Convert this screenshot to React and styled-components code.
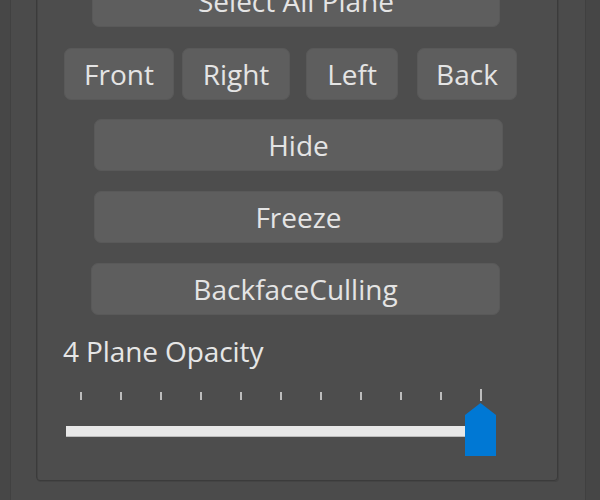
import React from "react";
import styled, { createGlobalStyle } from "styled-components";

const GlobalStyle = createGlobalStyle`
  html, body {
    margin: 0;
    padding: 0;
    background: #4b4b4b;
  }
  body {
    font-family: "Open Sans", "Noto Sans", "DejaVu Sans", sans-serif;
  }
`;

const Page = styled.div`
  width: 600px;
  height: 500px;
  overflow: hidden;
  display: flex;
  background: #4b4b4b;
`;

const LeftStrip = styled.div`
  width: 10px;
  flex: none;
  background: #474747;
  border-right: 1px solid #414141;
`;

const Main = styled.div`
  flex: 1;
  padding-left: 25px;
  padding-right: 27px;
`;

const RightStrip = styled.div`
  width: 14px;
  flex: none;
  background: #464646;
  border-left: 1px solid #404040;
`;

const GroupBox = styled.div`
  margin-top: -40px;
  height: 521px;
  box-sizing: border-box;
  border: 1px solid #3b3b3b;
  border-radius: 4px;
  background: #4d4d4d;
  box-shadow: inset 1px 1px 0 #454545, 1px 1px 0 #444;
  display: flex;
  flex-direction: column;
  padding-top: 14px;
`;

const Button = styled.button`
  box-sizing: border-box;
  height: 52px;
  width: ${(p) => p.$w}px;
  margin-left: ${(p) => p.$ml}px;
  flex: none;
  padding: 0;
  border: 1px solid #595959;
  border-radius: 7px;
  background: #5e5e5e;
  color: #e4e4e4;
  font-family: inherit;
  font-size: 28px;
  line-height: 1;
  text-align: center;
  cursor: pointer;
`;

const Row = styled.div`
  display: flex;
  margin-top: ${(p) => p.$mt}px;
`;

const Label = styled.div`
  margin: 17px 0 0 26px;
  color: #e6e6e6;
  font-size: 28px;
  line-height: 38px;
  height: 38px;
  letter-spacing: -0.1px;
`;

const Slider = styled.div`
  position: relative;
  margin: 19px 0 0 29px;
  width: 430px;
  height: 70px;
`;

const Ticks = styled.div`
  display: flex;
  justify-content: space-between;
  align-items: flex-end;
  width: 402px;
  margin-left: 14px;
  height: 12px;
`;

const Tick = styled.span`
  width: 2px;
  height: ${(p) => (p.$end ? 12 : 8)}px;
  background: #bdbdbd;
  margin-bottom: ${(p) => (p.$end ? 0 : 1)}px;
`;

const Track = styled.div`
  margin-top: 25px;
  width: 400px;
  height: 10px;
  background: #e8e8e8;
  box-shadow: 0 1px 0 #bcbcbc;
`;

const Thumb = styled.svg`
  position: absolute;
  left: 399px;
  top: 14px;
`;

export default function App() {
  const ticks = Array.from({ length: 11 }, (_, i) => i);
  return (
    <>
      <GlobalStyle />
      <Page>
        <LeftStrip />
        <Main>
          <GroupBox>
            <Button $w={408} $ml={55}>Select All Plane</Button>
            <Row $mt={21}>
              <Button $w={110} $ml={27}>Front</Button>
              <Button $w={108} $ml={8}>Right</Button>
              <Button $w={92} $ml={16}>Left</Button>
              <Button $w={100} $ml={19}>Back</Button>
            </Row>
            <Row $mt={19}>
              <Button $w={409} $ml={57}>Hide</Button>
            </Row>
            <Row $mt={20}>
              <Button $w={409} $ml={57}>Freeze</Button>
            </Row>
            <Row $mt={20}>
              <Button $w={409} $ml={54}>BackfaceCulling</Button>
            </Row>
            <Label>4 Plane Opacity</Label>
            <Slider>
              <Ticks>
                {ticks.map((i) => (
                  <Tick key={i} $end={i === 10} />
                ))}
              </Ticks>
              <Track />
              <Thumb width="31" height="53" viewBox="0 0 31 53">
                <path d="M15.5 0 L31 12 L31 53 L0 53 L0 12 Z" fill="#0078d4" />
              </Thumb>
            </Slider>
          </GroupBox>
        </Main>
        <RightStrip />
      </Page>
    </>
  );
}
